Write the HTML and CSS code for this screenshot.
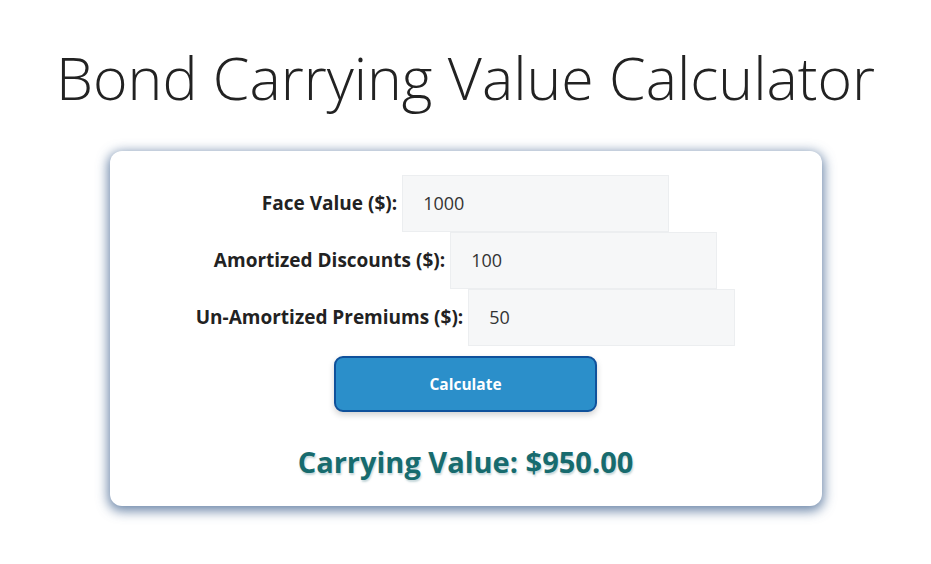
FILE: index.html
```html
<!DOCTYPE html>
<html lang="en">
<head>
    <meta charset="UTF-8">
    <meta name="viewport" content="width=device-width, initial-scale=1.0">
    <title>Bond Carrying Value Calculator</title>
    <link rel="stylesheet" href="styles.css">
</head>
<body>
<h1>Bond Carrying Value Calculator</h1>
<div class="container">
    <form class="calc-form" onsubmit="calculate(); return false;">
        <div class="input-group">
            <label for="faceValue">Face Value ($):</label>
            <input type="number" id="faceValue" value="1000">
        </div>
        <div class="input-group">
            <label for="discounts">Amortized Discounts ($):</label>
            <input type="number" id="discounts" value="100">
        </div>
        <div class="input-group">
            <label for="premiums">Un-Amortized Premiums ($):</label>
            <input type="number" id="premiums" value="50">
        </div>
        <button type="submit">Calculate</button>
        <div id="result" class="result">Carrying Value: $950.00</div>
    </form>
</div>

<script>
    function calculate() {
        const face = parseFloat(document.getElementById('faceValue').value) || 0;
        const disc = parseFloat(document.getElementById('discounts').value) || 0;
        const prem = parseFloat(document.getElementById('premiums').value) || 0;
        // carrying value = face - discounts + premiums
        const value = face - disc + prem;
        document.getElementById('result').innerText = `Carrying Value: $${value.toFixed(2)}`;
    }
</script>
</body>
</html>
```

FILE: styles.css
```css
body {
    margin: 0;
    font-family: "Open Sans", "Noto Sans", sans-serif;
    background: #ffffff;
    color: #222222;
}

h1 {
    text-align: center;
    font-weight: 300;
    font-size: 59px;
    margin: 42px 0 38px;
    line-height: 1.2;
    color: #222222;
}

.container {
    width: 712px;
    margin: 0 auto 40px;
    background: #ffffff;
    border-radius: 12px;
    box-shadow: 0 3px 12px 2px rgba(60, 95, 140, 0.75); /* bluish glow round the card */
    padding: 24px 0 24px;
    box-sizing: border-box;
}

.calc-form {
    display: flex;
    flex-direction: column;
    align-items: center;
}

.input-group {
    display: flex;
    align-items: center;
    justify-content: center;
}

label {
    font-weight: bold;
    font-size: 19px;
    color: #222222;
    margin-right: 5px;
}

input[type="number"] {
    width: 267px;
    height: 57px;
    box-sizing: border-box;
    padding: 0 20px;
    font-family: inherit;
    font-size: 18px;
    color: #333333;
    background-color: #f6f7f8;
    border: 1px solid #eceef0;
    outline: none;
    -moz-appearance: textfield;
}

input::-webkit-outer-spin-button,
input::-webkit-inner-spin-button {
    -webkit-appearance: none;
    margin: 0;
}

button[type="submit"] {
    width: 263px;
    height: 56px;
    margin-top: 10px;
    background-color: #2b8fca;
    color: #ffffff;
    border: 2px solid #0f519b;
    border-radius: 9px;
    font-family: inherit;
    font-weight: bold;
    font-size: 15.5px;
    cursor: pointer;
    box-shadow: 0 3px 6px rgba(0, 0, 0, 0.18);
}

button:hover {
    background-color: #227cb2;
}

.result {
    margin-top: 30px;
    font-size: 29px;
    font-weight: bold;
    line-height: 40px;
    color: #176b6e;
    text-shadow: 1px 2px 2px rgba(90, 140, 150, 0.35);
}
```
